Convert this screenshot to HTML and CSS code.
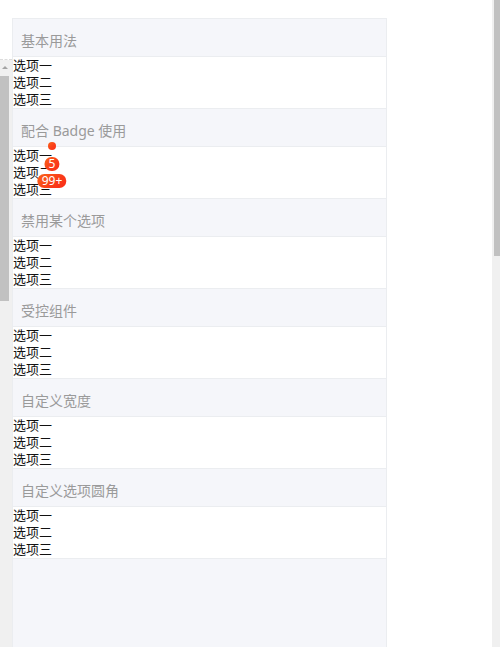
FILE: index.html
```html
<!DOCTYPE html>
<html lang="zh-CN">
<head>
<meta charset="utf-8">
<title>Sidebar demo</title>
<link rel="stylesheet" href="styles.css">
</head>
<body>
<div class="screen">
  <div class="rail">
    <div class="rail-top"></div>
    <div class="rail-track">
      <span class="rail-arrow"></span>
      <div class="rail-thumb"></div>
    </div>
  </div>
  <div class="panel">
    <section class="demo">
      <h2 class="demo-title">基本用法</h2>
      <div class="demo-body">
        <div class="item"><span class="label">选项一</span></div>
        <div class="item"><span class="label">选项二</span></div>
        <div class="item"><span class="label">选项三</span></div>
      </div>
    </section>
    <section class="demo">
      <h2 class="demo-title">配合 Badge 使用</h2>
      <div class="demo-body">
        <div class="item"><span class="label">选项一<i class="badge badge-dot"></i></span></div>
        <div class="item"><span class="label">选项二<i class="badge">5</i></span></div>
        <div class="item"><span class="label">选项三<i class="badge">99+</i></span></div>
      </div>
    </section>
    <section class="demo">
      <h2 class="demo-title">禁用某个选项</h2>
      <div class="demo-body">
        <div class="item"><span class="label">选项一</span></div>
        <div class="item"><span class="label">选项二</span></div>
        <div class="item"><span class="label">选项三</span></div>
      </div>
    </section>
    <section class="demo">
      <h2 class="demo-title">受控组件</h2>
      <div class="demo-body">
        <div class="item"><span class="label">选项一</span></div>
        <div class="item"><span class="label">选项二</span></div>
        <div class="item"><span class="label">选项三</span></div>
      </div>
    </section>
    <section class="demo">
      <h2 class="demo-title">自定义宽度</h2>
      <div class="demo-body">
        <div class="item"><span class="label">选项一</span></div>
        <div class="item"><span class="label">选项二</span></div>
        <div class="item"><span class="label">选项三</span></div>
      </div>
    </section>
    <section class="demo">
      <h2 class="demo-title">自定义选项圆角</h2>
      <div class="demo-body">
        <div class="item"><span class="label">选项一</span></div>
        <div class="item"><span class="label">选项二</span></div>
        <div class="item"><span class="label">选项三</span></div>
      </div>
    </section>
    <div class="panel-fill"></div>
  </div>
  <div class="gap"></div>
  <div class="vscroll"><div class="vthumb"></div></div>
</div>
</body>
</html>
```

FILE: styles.css
```css
html, body {
  margin: 0;
  padding: 0;
  background: #ffffff;
  overflow: hidden;
}

body {
  font-family: "Noto Sans", "Noto Sans CJK SC", sans-serif;
}

.screen {
  display: flex;
  height: 647px;
  overflow: hidden;
}

/* left inner scrollbar */
.rail {
  width: 12px;
  flex: none;
  display: flex;
  flex-direction: column;
}

.rail-top {
  height: 60px;
  border-bottom: 1px dashed #dcdcdc;
  box-sizing: border-box;
}

.rail-track {
  flex: 1;
  background: #f0f0f0;
  display: flex;
  flex-direction: column;
}

.rail-arrow {
  width: 0;
  height: 0;
  margin: 6px 0 0 2px;
  border-left: 3px solid transparent;
  border-right: 3px solid transparent;
  border-bottom: 3px solid #a3a3a3;
}

.rail-thumb {
  width: 9px;
  height: 225px;
  margin-top: 7px;
  background: #c1c1c1;
}

/* main demo panel */
.panel {
  width: 373px;
  flex: none;
  margin-top: 18px;
  border: 1px solid #ebedf0;
  border-bottom: none;
  background: #f5f6fa;
  display: flex;
  flex-direction: column;
}

.demo-title {
  margin: 0;
  height: 38px;
  box-sizing: border-box;
  padding: 13px 8px 7px;
  font-size: 14px;
  line-height: 17px;
  font-weight: normal;
  color: #9a9a9a;
  border-bottom: 1px solid #ebedf0;
}

.demo-body {
  background: #ffffff;
  border-bottom: 1px solid #ebedf0;
  font-size: 13px;
  line-height: 17px;
  color: #111111;
}

.item {
  height: 17px;
}

.label {
  position: relative;
  display: inline-block;
}

.badge {
  position: absolute;
  top: 0;
  right: 0;
  transform: translate(50%, -50%);
  min-width: 6px;
  height: 14px;
  padding: 0 4px;
  border-radius: 7px;
  background: linear-gradient(315deg, #fa2c19 0%, #fa3f19 45%, #fa5919 83%, #fa6419 100%);
  color: #ffffff;
  font-style: normal;
  font-size: 12px;
  line-height: 14px;
  text-align: center;
  white-space: nowrap;
}

.badge-dot {
  min-width: 0;
  width: 8px;
  height: 8px;
  padding: 0;
  border-radius: 50%;
  top: -1px;
}

.panel-fill {
  flex: 1;
}

.gap {
  flex: 1;
}

/* page scrollbar */
.vscroll {
  width: 8px;
  flex: none;
  background: #f0f0f0;
  display: flex;
  justify-content: flex-end;
}

.vthumb {
  width: 6px;
  height: 256px;
  background: #c1c1c1;
}
```
